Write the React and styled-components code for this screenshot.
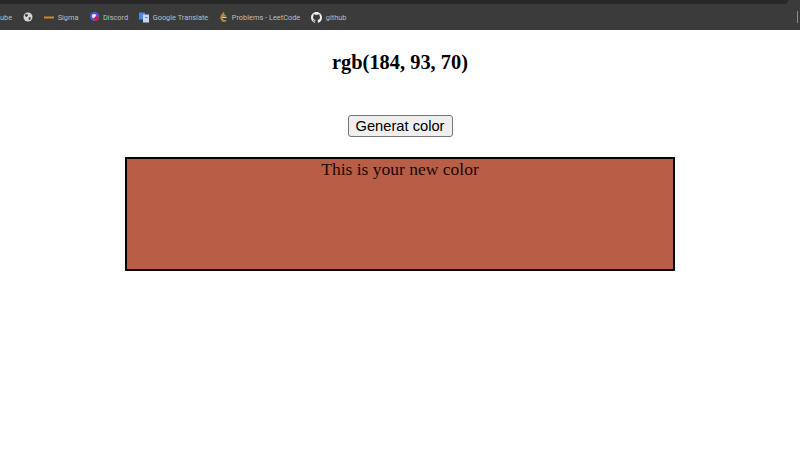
import React from 'react'
import styled, { createGlobalStyle } from 'styled-components'

const GlobalStyle = createGlobalStyle`
  html, body {
    margin: 0;
    padding: 0;
    background: #fff;
  }
`

const Page = styled.div`
  width: 800px;
  height: 450px;
  overflow: hidden;
  display: flex;
  flex-direction: column;
`

const BrowserChrome = styled.header`
  height: 30px;
  flex: none;
  background: #3b3b3b;
  display: flex;
  flex-direction: column;
`

const AddressBar = styled.div`
  height: 4px;
  flex: none;
  margin-right: 12px;
  background: #282828;
  border-radius: 0 0 8px 0;
`

const BookmarksBar = styled.nav`
  flex: 1;
  display: flex;
  align-items: center;
  gap: 11px;
  padding-right: 2px;
  overflow: hidden;
  font-family: Roboto, "Liberation Sans", sans-serif;
  font-size: 7.4px;
  color: #bdbdbd;
`

const Bookmark = styled.span`
  display: flex;
  align-items: center;
  gap: 3.5px;
  white-space: nowrap;
`

const Separator = styled.span`
  width: 1px;
  height: 12px;
  margin-left: auto;
  background: #8a8a8a;
`

const Content = styled.main`
  flex: 1;
  display: flex;
  flex-direction: column;
  align-items: center;
`

const Heading = styled.h1`
  margin: 20px 0 0;
  font-family: "Liberation Serif", serif;
  font-size: 20.4px;
  line-height: 24px;
  font-weight: bold;
  color: #000;
`

const GenerateButton = styled.button`
  margin-top: 41px;
  width: 105px;
  height: 22px;
  padding: 0;
  font-family: "Liberation Sans", sans-serif;
  font-size: 14.7px;
  color: #000;
  background: #efefef;
  border: 1px solid #767676;
  border-radius: 3px;
`

const ColorBox = styled.div`
  margin-top: 20px;
  box-sizing: border-box;
  width: 550px;
  height: 114px;
  border: 2px solid #000;
  background: ${p => p.$color};
  text-align: center;
  font-family: "Liberation Serif", serif;
  font-size: 17.5px;
  line-height: 20px;
  color: #1a0a06;
`

const GlobeIcon = () => (
  <svg width="10" height="10" viewBox="0 0 10 10">
    <circle cx="5" cy="5" r="4.5" fill="#d4d4d4" />
    <path d="M2 2.5 L4.5 2 L5 3.5 L3.5 5 L2 4 Z M6 5 L8 5.5 L7 8 L5.5 7.5 Z" fill="#3b3b3b" />
  </svg>
)

const SigmaIcon = () => (
  <svg width="10" height="6" viewBox="0 0 10 6">
    <rect x="0" y="0.5" width="10" height="2" fill="#4a3a20" />
    <rect x="0" y="2.5" width="10" height="2" fill="#c98a2c" />
  </svg>
)

const DiscordIcon = () => (
  <svg width="10" height="10" viewBox="0 0 11 11">
    <circle cx="5" cy="5" r="5" fill="#4f56d8" />
    <circle cx="4.5" cy="4.5" r="2.4" fill="#e8e8f4" />
    <circle cx="7" cy="7.2" r="2.4" fill="#d8202c" />
  </svg>
)

const TranslateIcon = () => (
  <svg width="10" height="11" viewBox="0 0 10 11">
    <rect x="0" y="0.5" width="6" height="7" fill="#4a8be8" />
    <rect x="4" y="2.5" width="6" height="8" fill="#c4d8f4" />
    <rect x="6" y="5" width="2.5" height="1" fill="#4a8be8" />
  </svg>
)

const LeetCodeIcon = () => (
  <svg width="9" height="12" viewBox="0 0 9 12">
    <path d="M5 0.5 L2 4 L1 7 L3 10.5 L6 11 L8 9 L5 9 L3.5 7 L5 5.5 L8 5.5 L5.5 3.5 Z" fill="#b08a3c" />
    <rect x="3.5" y="6" width="4" height="1" fill="#d8d8d8" />
  </svg>
)

const GithubIcon = () => (
  <svg width="11" height="11" viewBox="0 0 16 16" fill="#eeeeee">
    <path d="M8 0C3.58 0 0 3.58 0 8c0 3.54 2.29 6.53 5.47 7.59.4.07.55-.17.55-.38 0-.19-.01-.82-.01-1.49-2.01.37-2.53-.49-2.69-.94-.09-.23-.48-.94-.82-1.13-.28-.15-.68-.52-.01-.53.63-.01 1.08.58 1.23.82.72 1.21 1.87.87 2.33.66.07-.52.28-.87.51-1.07-1.78-.2-3.64-.89-3.64-3.95 0-.87.31-1.59.82-2.15-.08-.2-.36-1.02.08-2.12 0 0 .67-.21 2.2.82.64-.18 1.32-.27 2-.27s1.36.09 2 .27c1.53-1.04 2.2-.82 2.2-.82.44 1.1.16 1.92.08 2.12.51.56.82 1.27.82 2.15 0 3.07-1.87 3.75-3.65 3.95.29.25.54.73.54 1.48 0 1.07-.01 1.93-.01 2.2 0 .21.15.46.55.38A8.01 8.01 0 0 0 16 8c0-4.42-3.58-8-8-8z" />
  </svg>
)

export default function App() {
  const color = 'rgb(184, 93, 70)'
  return (
    <Page>
      <GlobalStyle />
      <BrowserChrome>
        <AddressBar />
        <BookmarksBar>
          <Bookmark>ube</Bookmark>
          <Bookmark><GlobeIcon /></Bookmark>
          <Bookmark><SigmaIcon />Sigma</Bookmark>
          <Bookmark><DiscordIcon />Discord</Bookmark>
          <Bookmark><TranslateIcon />Google Translate</Bookmark>
          <Bookmark><LeetCodeIcon />Problems - LeetCode</Bookmark>
          <Bookmark><GithubIcon />github</Bookmark>
          <Separator />
        </BookmarksBar>
      </BrowserChrome>
      <Content>
        <Heading>{color}</Heading>
        <GenerateButton>Generat color</GenerateButton>
        <ColorBox $color={color}>This is your new color</ColorBox>
      </Content>
    </Page>
  )
}
